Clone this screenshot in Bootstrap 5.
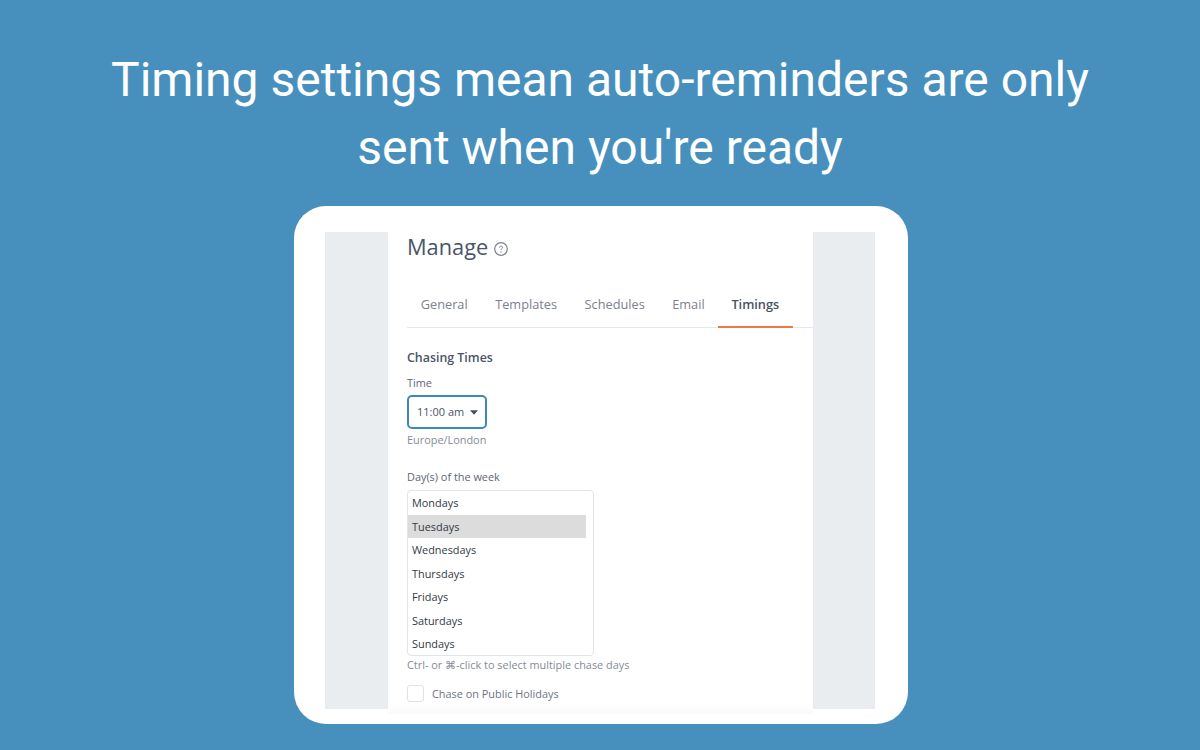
<!DOCTYPE html>
<html lang="en">
<head>
<meta charset="utf-8">
<title>Timings</title>
<link href="https://cdn.jsdelivr.net/npm/bootstrap@5.3.0/dist/css/bootstrap.min.css" rel="stylesheet">
<style>
html,body{height:750px;overflow:hidden}
body{background:#4790bd;font-family:"Open Sans",sans-serif}
.hero-title{font:400 48px/68px Roboto,sans-serif;color:#fff;text-align:center;margin:0;padding-top:46px;height:206px}
.shot-card{width:614px;height:518px;margin-left:294px;background:#fff;border-radius:32px;padding:26px 33px 10px 31px}
.shot-inner{height:482px;overflow:hidden}
.side-strip{background:#e9edf0;flex:0 0 63px;height:477px}
.side-strip.end{flex-basis:62px}
.main-pane{flex:0 0 425px;padding-left:19px;color:#454f63;background:linear-gradient(#fff 470px,#fafafa 482px)}
.pg-title{font-size:21.8px;line-height:30px;font-weight:400;color:#4a5568;margin:0;height:58px}
.help-ico{width:14px;height:14px;vertical-align:-1px}
.tabs-row{border-bottom:1px solid #e6e8ee;height:38px}
.tab-item{font-size:12.75px;line-height:18px;color:#7b818d;padding:5px 13.75px 0;height:38px}
.tab-item.on{font-weight:600;color:#495366;border-bottom:2px solid #ea7b47;padding-left:13px;padding-right:14px}
.sec-head{font-size:12.4px;font-weight:600;line-height:17px;color:#4a5568;margin:21px 0 0}
.fld-label{font-size:10.9px;line-height:15px;color:#5d6675;display:block}
.lbl-time{margin-top:9px}
.time-box{width:80px;height:34px;border:2px solid #3c88b8;border-radius:5px;font-size:11px;color:#4a5568;padding:0 7px 0 8px;margin-top:5px}
.caret-ico{width:8px;height:5px}
.hint-txt{font-size:10.9px;line-height:15px;color:#858b96}
.tz{margin-top:3px}
.lbl-days{margin-top:22px}
.days-box{width:187px;height:166px;border:1px solid #e3e4ea;border-radius:4px;margin-top:6px;padding-right:7px;list-style:none;margin-bottom:0}
.days-box li{font-size:10.9px;height:23.55px;line-height:23.55px;padding-left:4px;color:#333a44}
.days-box li.sel{background:#dcdcdc}
.hint-days{margin-top:1px}
.chk-row{margin-top:13px;gap:8px}
.chk-box{width:17px;height:17px;border:1px solid #dfe1e7;border-radius:3px;background:#fff}
.chk-text{font-size:10.9px;line-height:17px;color:#6d7482}
</style>
</head>
<body>
<h1 class="hero-title">Timing settings mean auto-reminders are only<br>sent when you're ready</h1>
<div class="shot-card">
  <div class="shot-inner d-flex">
    <div class="side-strip"></div>
    <div class="main-pane">
      <h2 class="pg-title">Manage <svg class="help-ico" viewBox="0 0 14 14" fill="none"><circle cx="7" cy="7" r="6.3" stroke="#7d838e" stroke-width="1.2"/><path d="M5.4 5.6c0-1 .8-1.5 1.6-1.5s1.6.5 1.6 1.4c0 1.2-1.6 1.2-1.6 2.4" stroke="#7d838e" stroke-width="1"/><circle cx="7" cy="9.9" r=".7" fill="#7d838e"/></svg></h2>
      <div class="tabs-row d-flex">
        <div class="tab-item">General</div>
        <div class="tab-item">Templates</div>
        <div class="tab-item">Schedules</div>
        <div class="tab-item">Email</div>
        <div class="tab-item on">Timings</div>
      </div>
      <h3 class="sec-head">Chasing Times</h3>
      <span class="fld-label lbl-time">Time</span>
      <div class="time-box d-flex align-items-center justify-content-between">
        <span>11:00 am</span>
        <svg class="caret-ico" viewBox="0 0 9 5"><path d="M0 0h9L4.5 5z" fill="#454f63"/></svg>
      </div>
      <div class="hint-txt tz">Europe/London</div>
      <span class="fld-label lbl-days">Day(s) of the week</span>
      <ul class="days-box ps-0">
        <li>Mondays</li>
        <li class="sel">Tuesdays</li>
        <li>Wednesdays</li>
        <li>Thursdays</li>
        <li>Fridays</li>
        <li>Saturdays</li>
        <li>Sundays</li>
      </ul>
      <div class="hint-txt hint-days">Ctrl- or ⌘-click to select multiple chase days</div>
      <div class="chk-row d-flex align-items-center">
        <span class="chk-box"></span>
        <span class="chk-text">Chase on Public Holidays</span>
      </div>
    </div>
    <div class="side-strip end"></div>
  </div>
</div>
<script src="https://cdn.jsdelivr.net/npm/bootstrap@5.3.0/dist/js/bootstrap.bundle.min.js"></script>
</body>
</html>
